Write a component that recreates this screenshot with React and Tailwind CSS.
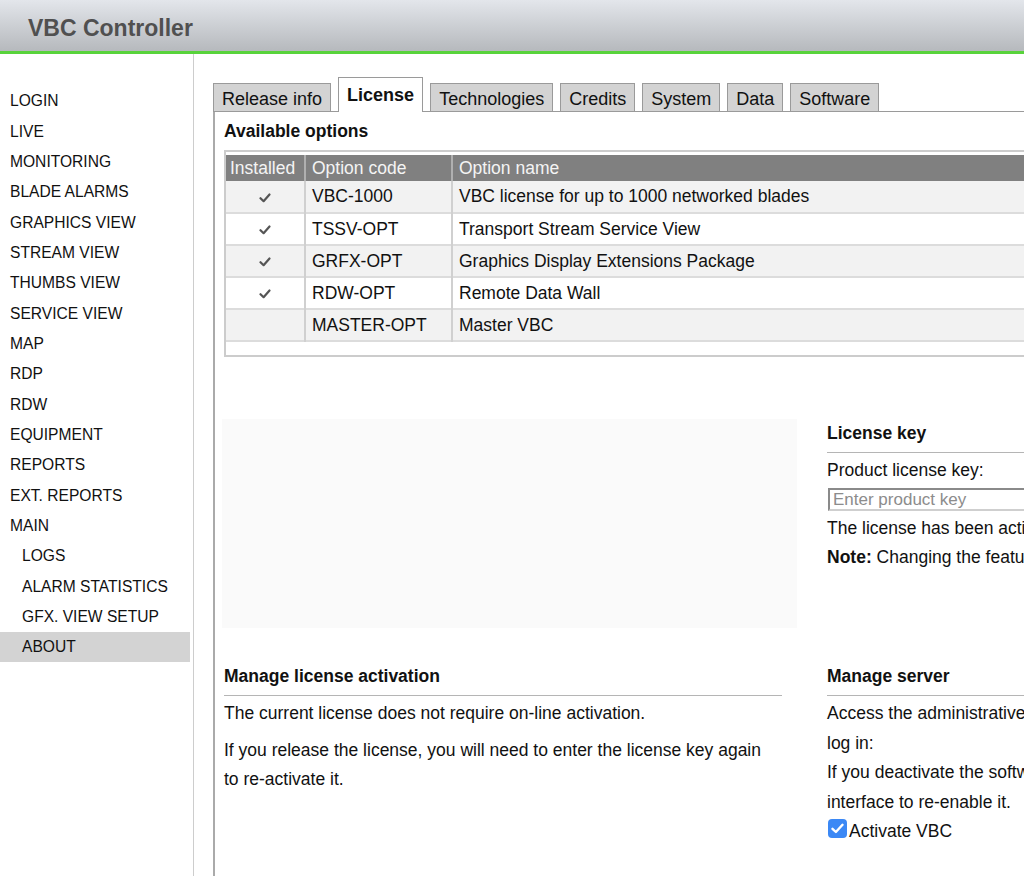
import React from 'react';

const navItems = [
  { label: 'LOGIN' },
  { label: 'LIVE' },
  { label: 'MONITORING' },
  { label: 'BLADE ALARMS' },
  { label: 'GRAPHICS VIEW' },
  { label: 'STREAM VIEW' },
  { label: 'THUMBS VIEW' },
  { label: 'SERVICE VIEW' },
  { label: 'MAP' },
  { label: 'RDP' },
  { label: 'RDW' },
  { label: 'EQUIPMENT' },
  { label: 'REPORTS' },
  { label: 'EXT. REPORTS' },
  { label: 'MAIN' },
  { label: 'LOGS', sub: true },
  { label: 'ALARM STATISTICS', sub: true },
  { label: 'GFX. VIEW SETUP', sub: true },
  { label: 'ABOUT', sub: true, active: true },
];

const tabs = ['Release info', 'License', 'Technologies', 'Credits', 'System', 'Data', 'Software'];

const options = [
  { installed: true, code: 'VBC-1000', name: 'VBC license for up to 1000 networked blades' },
  { installed: true, code: 'TSSV-OPT', name: 'Transport Stream Service View' },
  { installed: true, code: 'GRFX-OPT', name: 'Graphics Display Extensions Package' },
  { installed: true, code: 'RDW-OPT', name: 'Remote Data Wall' },
  { installed: false, code: 'MASTER-OPT', name: 'Master VBC' },
];

function Check() {
  return (
    <svg width="12" height="10" viewBox="0 0 12 10" className="inline-block">
      <path d="M1.5 5.2 L4.6 8.2 L10.5 1.5" fill="none" stroke="#555" strokeWidth="2.2" strokeLinecap="round" strokeLinejoin="round" />
    </svg>
  );
}

function SectionTitle({ children }) {
  return (
    <h3 className="font-bold leading-[29px] pb-[4px] border-b border-[#b5b5b5]">{children}</h3>
  );
}

export default function App() {
  return (
    <div className="w-[1024px] h-[876px] overflow-hidden bg-white text-[#111] font-['Liberation_Sans',Arial,sans-serif]">
      {/* Top bar */}
      <header className="h-[54px] border-b-[3px] border-[#58d33b] bg-gradient-to-b from-[#e3e6eb] to-[#b6b9bd] flex items-center pl-[28px] pt-[5px]">
        <h1 className="text-[23px] font-bold text-[#505050] leading-none">VBC Controller</h1>
      </header>

      <div className="flex h-[822px]">
        {/* Side navigation */}
        <aside className="w-[194px] shrink-0 border-r border-[#cdcdcd] pt-[32px]">
          <ul className="w-[190px]">
            {navItems.map((item) => (
              <li
                key={item.label}
                className={
                  'h-[30.33px] flex items-center text-[15.6px] ' +
                  (item.sub ? 'pl-[22px] ' : 'pl-[10px] ') +
                  (item.active ? 'bg-[#d3d3d3]' : '')
                }
              >
                {item.label}
              </li>
            ))}
          </ul>
        </aside>

        {/* Main content */}
        <main className="flex-1 min-w-0 overflow-hidden pl-[19px] pt-[23px]">
          <div className="flex items-end gap-[7px] h-[35px] border-b border-[#9a9a9a] w-[900px]">
            {tabs.map((tab) =>
              tab === 'License' ? (
                <div
                  key={tab}
                  className="h-[35px] -mb-px px-[8px] flex items-center bg-white border border-b-0 border-[#9a9a9a] text-[18px] font-bold"
                >
                  {tab}
                </div>
              ) : (
                <div
                  key={tab}
                  className="h-[29px] -mb-px px-[8px] pt-[3px] flex items-center bg-[#d3d3d3] border border-[#9a9a9a] text-[18px]"
                >
                  {tab}
                </div>
              )
            )}
          </div>

          <div className="border-l-2 border-[#aaaaaa] pl-[9px] pt-[5px] h-[800px] w-[900px] text-[17.5px]">
            <h2 className="font-bold leading-[29px]">Available options</h2>

            {/* Options table */}
            <div className="mt-[4px] border-2 border-[#cccccc] pt-[3px] pb-[13px] w-[880px]">
              <table className="w-[860px] border-collapse table-fixed">
                <colgroup>
                  <col className="w-[79px]" />
                  <col className="w-[147px]" />
                  <col />
                </colgroup>
                <thead>
                  <tr className="h-[26px] bg-[#808080] text-[#f4f4f4]">
                    <th className="font-normal text-left px-[4px] leading-[26px] border-r-2 border-[#b0b0b0]">Installed</th>
                    <th className="font-normal text-left px-[6px] leading-[26px] border-r-2 border-[#b0b0b0]">Option code</th>
                    <th className="font-normal text-left px-[6px] leading-[26px]">Option name</th>
                  </tr>
                </thead>
                <tbody>
                  {options.map((opt, i) => (
                    <tr key={opt.code} className={'h-[32px] border-b-2 border-[#dcdcdc] ' + (i % 2 === 0 ? 'bg-[#f2f2f2]' : 'bg-white')}>
                      <td className="text-center border-r-2 border-[#d0d0d0]">{opt.installed && <Check />}</td>
                      <td className="px-[6px] border-r-2 border-[#d0d0d0]">{opt.code}</td>
                      <td className="px-[6px] whitespace-nowrap">{opt.name}</td>
                    </tr>
                  ))}
                </tbody>
              </table>
            </div>

            {/* License panels */}
            <div className="mt-[62px] -ml-[2px] grid grid-cols-[575px_400px] gap-x-[30px] gap-y-[34px]">
              <div className="h-[209px] bg-[#fafafa]" />

              <div>
                <SectionTitle>License key</SectionTitle>
                <p className="leading-[29px] pt-[3px]">Product license key:</p>
                <input
                  type="text"
                  placeholder="Enter product key"
                  className="mt-[3px] ml-px h-[23px] w-[360px] border-2 border-[#8a8a8a] border-r-[#cfcfcf] border-b-[#cfcfcf] px-[3px] text-[17px] placeholder:text-[#8c8c8c] outline-none"
                />
                <p className="mt-[2px] leading-[29px] whitespace-nowrap">The license has been activated successfully.</p>
                <p className="leading-[29px] whitespace-nowrap">
                  <span className="font-bold">Note:</span> Changing the feature set requires a restart.
                </p>
              </div>

              <div className="pl-[2px] pr-[15px]">
                <SectionTitle>Manage license activation</SectionTitle>
                <p className="leading-[29px] pt-[3px]">The current license does not require on-line activation.</p>
                <p className="leading-[29px] mt-[8px] w-[545px]">
                  If you release the license, you will need to enter the license key again to re-activate it.
                </p>
              </div>

              <div>
                <SectionTitle>Manage server</SectionTitle>
                <div className="pt-[3px] leading-[29.5px]">
                  <p className="whitespace-nowrap">Access the administrative interface of the server to</p>
                  <p>log in:</p>
                  <p className="whitespace-nowrap">If you deactivate the software, use the administrative</p>
                  <p>interface to re-enable it.</p>
                  <label className="flex items-center h-[29.5px]">
                    <span className="-mt-[6px] ml-px w-[19px] h-[19px] rounded-[4px] bg-[#3b88f5] flex items-center justify-center">
                      <svg width="13" height="11" viewBox="0 0 13 11">
                        <path d="M1.5 5.8 L4.9 9 L11.5 1.8" fill="none" stroke="white" strokeWidth="2.4" strokeLinecap="round" strokeLinejoin="round" />
                      </svg>
                    </span>
                    <span className="ml-[2px]">Activate VBC</span>
                  </label>
                </div>
              </div>
            </div>
          </div>
        </main>
      </div>
    </div>
  );
}
